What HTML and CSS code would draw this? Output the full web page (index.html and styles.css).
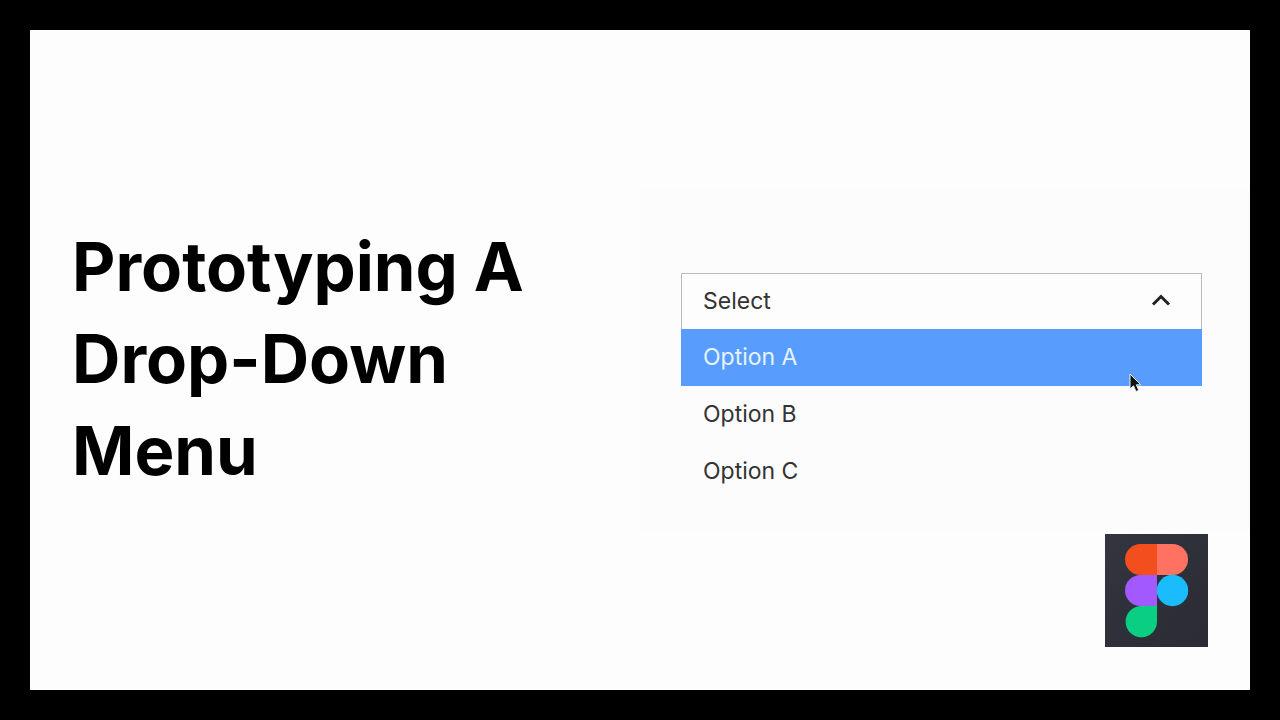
FILE: index.html
```html
<!doctype html>
<html lang="en">
<head>
  <meta charset="UTF-8">
  <meta name="viewport" content="width=device-width, initial-scale=1.0">
  <title>Prototyping A Drop-Down Menu</title>
  <link rel="stylesheet" href="styles.css">
</head>
<body>
<main class="slide">
  <h1 class="slide-title">Prototyping A Drop-Down Menu</h1>
  <section class="preview">
    <div class="dropdown">
      <div class="dropdown-head">
        <select class="dropdown-select" id="option-select" aria-label="Select an option">
          <option>Select</option>
          <option>Option A</option>
          <option>Option B</option>
          <option>Option C</option>
        </select>
        <svg class="dropdown-arrow" viewBox="0 0 20 14" aria-hidden="true">
          <path d="M2 11.500 10 3.500l8 8"/>
        </svg>
      </div>
      <ul class="dropdown-list">
        <li class="dropdown-item">
          <button class="dropdown-option active" type="button">Option A</button>
          <svg class="cursor" viewBox="0 0 14 22" aria-hidden="true">
            <path d="M2 2v15l3.500-3.200 2.500 5.700 2.800-1.200-2.500-5.500h4.500z"/>
          </svg>
        </li>
        <li class="dropdown-item"><button class="dropdown-option" type="button">Option B</button></li>
        <li class="dropdown-item"><button class="dropdown-option" type="button">Option C</button></li>
      </ul>
    </div>
  </section>
  <svg class="figma-logo" viewBox="0 0 103 113" role="img" aria-label="Figma">
    <defs>
      <linearGradient id="logo-bg" x1="0" y1="0" x2="1" y2="1">
        <stop offset="0" stop-color="#33363f"/>
        <stop offset="1" stop-color="#2a2b33"/>
      </linearGradient>
    </defs>
    <rect width="103" height="113" fill="url(#logo-bg)"/>
    <path fill="#f24e1e" d="M52 10v31H35.500a15.500 15.500 0 0 1 0-31z"/>
    <path fill="#ff7262" d="M52 10h15.500a15.500 15.500 0 0 1 0 31H52z"/>
    <path fill="#a259ff" d="M52 41v31H35.500a15.500 15.500 0 0 1 0-31z"/>
    <circle fill="#1abcfe" cx="67.500" cy="56.500" r="15.700"/>
    <path fill="#0acf83" d="M35.500 72H52v15.500a15.700 15.700 0 1 1-16.500-15.500z"/>
  </svg>
</main>
<script>
  const select = document.querySelector('#option-select')
  const list = document.querySelector('.dropdown-list')

  // the list below replaces the native popup
  select.addEventListener('mousedown', e => {
    e.preventDefault()
    list.hidden = !list.hidden
  })

  list.addEventListener('click', e => {
    const option = e.target.closest('button')
    if (option) {
      select.value = option.textContent
      list.hidden = true
    }
  })
</script>
</body>
</html>
```
FILE: styles.css
```css
* {
  margin: 0;
  padding: 0;
  box-sizing: border-box;
}
body {
  font-family: Inter, "Liberation Sans", sans-serif;
  color: #333;
}
.slide {
  display: grid;
  grid-template-columns: 1fr 1fr;
  grid-template-rows: 1fr auto 1fr;
  min-height: 100vh;
  border: 30px solid #000;
  background: #fdfdfd;
}
.slide-title {
  grid-row: 1 / 4;
  align-self: center;
  padding: 0 42px 2px;
  color: #000;
  font-size: 67px;
  font-weight: 700;
  line-height: 92px;
}
.preview {
  grid-column: 2;
  grid-row: 2;
  padding: 84px 48px 31px 41px;
  background: #fcfcfc;
}
.dropdown-head {
  position: relative;
}
.dropdown-select {
  display: block;
  width: 100%;
  height: 56px;
  padding: 0 21px 2px;
  appearance: none;
  border: 1px solid #bbb;
  border-bottom: 0;
  border-radius: 0;
  background: #fdfdfd;
  color: inherit;
  font: inherit;
  font-size: 23px;
}
.dropdown-arrow {
  position: absolute;
  top: 20px;
  right: 31px;
  width: 20px;
  height: 14px;
  fill: none;
  stroke: #222;
  stroke-width: 3;
  pointer-events: none;
}
.dropdown-list {
  list-style: none;
}
.dropdown-item {
  position: relative;
}
.dropdown-option {
  display: block;
  width: 100%;
  height: 57px;
  padding: 0 22px 1px;
  border: 0;
  background: none;
  color: inherit;
  font: inherit;
  font-size: 23px;
  text-align: left;
}
.dropdown-option.active {
  background: #589dfd;
  color: #e6f4ff;
}
.cursor {
  position: absolute;
  right: 60px;
  bottom: -8px;
  width: 14px;
  height: 22px;
  fill: #111;
  stroke: #e8eef5;
  stroke-width: 1;
  pointer-events: none;
}
.figma-logo {
  grid-column: 2;
  grid-row: 3;
  justify-self: end;
  width: 103px;
  height: 113px;
  margin: 3px 42px 0 0;
}
```
